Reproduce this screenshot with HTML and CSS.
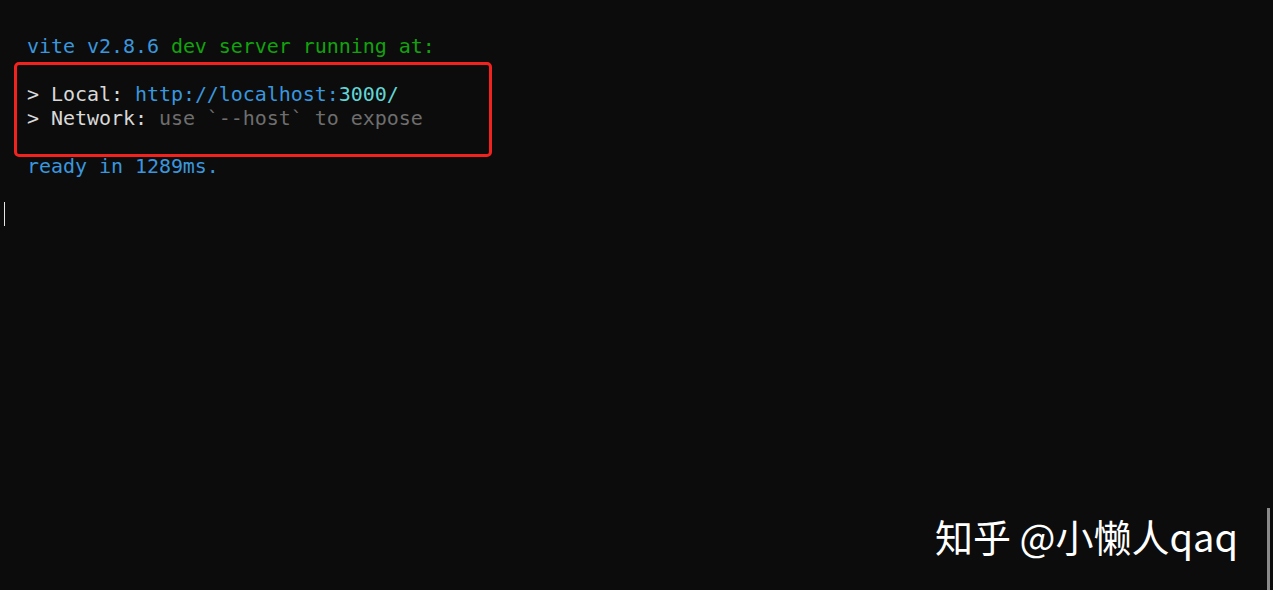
FILE: index.html
```html
<!DOCTYPE html>
<html>
<head>
    <title>vite dev server</title>
    <link rel="stylesheet" href="styles.css">
</head>
<body>
    <!-- terminal -->
    <div class="term">
        <div class="line">  <span class="cyan">vite v2.8.6</span> <span class="green">dev server running at:</span></div>
        <div class="line"> </div>
        <div class="line">  <span class="white">&gt; Local:</span> <span class="cyan">http://localhost:</span><span class="bcyan">3000/</span></div>
        <div class="line">  <span class="white">&gt; Network:</span> <span class="grey">use `--host` to expose</span></div>
        <div class="line"> </div>
        <div class="line">  <span class="cyan">ready in 1289ms.</span></div>
        <div class="line"> </div>
        <div class="line"><span class="cursor"></span></div>
        <!-- 红框标注 -->
        <div class="mark"></div>
    </div>
    <div class="watermark">知乎 @小懒人qaq</div>
    <div class="scroll"></div>
</body>
</html>
```

FILE: styles.css
```css
html, body{
    margin: 0;
    padding: 0;
    height: 100%;
    background-color: #0c0c0c;
    overflow: hidden;
}
body{
    position: relative;
}

/*终端*/
.term{
    position: relative;
    padding: 34px 0 0 3px;
    font-family: "DejaVu Sans Mono", "Liberation Mono", monospace;
    font-size: 20px;
    letter-spacing: -0.05px;
    color: #cccccc;
}
.line{
    height: 24px;
    line-height: 24px;
    white-space: pre;
}
.cyan{ color: #3a96dd; }
.green{ color: #13a10e; }
.bcyan{ color: #61d6d6; }
.white{ color: #d9d9d9; }
.grey{ color: #6e6e6e; }
.cursor{
    display: inline-block;
    width: 1px;
    height: 24px;
    margin-left: 1px;
    background-color: #e6e6e6;
    vertical-align: top;
}
.mark{
    position: absolute;
    left: 14px;
    top: 62px;
    width: 472px;
    height: 89px;
    border: 3px solid #f2231e;
    border-radius: 5px;
}

/*水印*/
.watermark{
    position: absolute;
    right: 35px;
    bottom: 33px;
    font-family: "Noto Sans CJK SC", "Noto Sans", sans-serif;
    font-size: 38px;
    line-height: 42px;
    color: #ffffff;
}
.scroll{
    position: absolute;
    right: 3px;
    top: 508px;
    bottom: 0;
    width: 3px;
    background-color: #8a8a8a;
}
```
